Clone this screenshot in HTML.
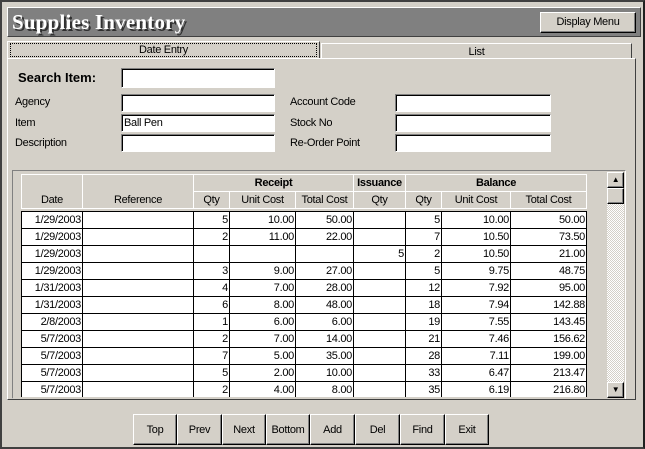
<!DOCTYPE html>
<html><head><style>
*{box-sizing:border-box;margin:0;padding:0}
body{width:645px;height:449px;background:#d4d0c8;font-family:"Liberation Sans",sans-serif;font-size:11px;position:relative;overflow:hidden;color:#000}
.a{position:absolute}
.frame{left:0;top:0;width:645px;height:449px;border:2px solid #404040;border-right-color:#202020}
.title{left:7px;top:7px;width:634px;height:30px;background:#808080;border:1px solid #fff;border-right-color:#404040;border-bottom-color:#404040}
.title span{position:absolute;left:4px;top:2px;font-family:"Liberation Serif",serif;font-size:21px;font-weight:bold;color:#fff;text-shadow:2px 2px 0 #303030;letter-spacing:0.2px}
.btn{background:#d4d0c8;border:1px solid;border-color:#fff #000 #000 #fff;box-shadow:inset -1px -1px 0 #808080;text-align:center;letter-spacing:-0.3px}
.tab{top:41px;height:18px;border:1px solid;border-color:#fff #404040 #d4d0c8 #fff;text-align:center;line-height:15px;letter-spacing:-0.3px}
.panel{left:7px;top:58px;width:629px;height:342px;border:1px solid;border-color:#fff #404040 #404040 #fff}
.lbl{letter-spacing:-0.3px}
.in{background:#fff;border:1px solid;border-color:#808080 #fff #fff #808080;box-shadow:inset 1px 1px 0 #000;padding:2px 0 0 2px;letter-spacing:-0.3px}
.grid{left:12px;top:170px;width:614px;height:229px;border:1px solid;border-color:#808080 #fff #fff #808080}
table{border-collapse:collapse;position:absolute;left:21px;top:174px;table-layout:fixed}
td{border:1px solid #000;height:17px;padding:0 1px;text-align:right;letter-spacing:-0.3px;white-space:nowrap;overflow:hidden;background:#fff;line-height:15px}
th{font-weight:normal;border:1px solid #fff;height:17px;background:#d4d0c8;letter-spacing:-0.3px;line-height:15px}
th.b{font-weight:bold}
.sb{left:607px;top:172px;width:17px;height:226px;background:repeating-conic-gradient(#d4d0c8 0 25%,#fff 0 50%) 0 0/2px 2px}
</style></head><body>
<div class="a frame"></div>
<div class="a title"><span>Supplies Inventory</span></div>
<div class="a btn" style="left:540px;top:12px;width:96px;height:21px;line-height:19px">Display Menu</div>
<div class="a tab" style="left:7px;width:313px"><span style="border:1px dotted #000;display:block;margin:1px 2px;line-height:12px">Date Entry</span></div>
<div class="a tab" style="left:321px;top:43px;width:311px;height:16px;line-height:17px">List</div>
<div class="a panel"></div>
<div class="a" style="left:18px;top:70px;font-size:13px;font-weight:bold">Search Item:</div>
<div class="a in" style="left:121px;top:68px;width:154px;height:20px"></div>
<div class="a lbl" style="left:15px;top:96px">Agency</div>
<div class="a lbl" style="left:15px;top:117px">Item</div>
<div class="a lbl" style="left:15px;top:137px">Description</div>
<div class="a in" style="left:121px;top:94px;width:154px;height:18px"></div>
<div class="a in" style="left:121px;top:114px;width:154px;height:18px">Ball Pen</div>
<div class="a in" style="left:121px;top:134px;width:154px;height:18px"></div>
<div class="a lbl" style="left:290px;top:96px">Account Code</div>
<div class="a lbl" style="left:290px;top:117px">Stock No</div>
<div class="a lbl" style="left:290px;top:137px">Re-Order Point</div>
<div class="a in" style="left:395px;top:94px;width:156px;height:18px"></div>
<div class="a in" style="left:395px;top:114px;width:156px;height:18px"></div>
<div class="a in" style="left:395px;top:134px;width:156px;height:18px"></div>
<div class="a grid"></div>
<table>
<colgroup><col style="width:61px"><col style="width:111px"><col style="width:36px"><col style="width:66px"><col style="width:58px"><col style="width:52px"><col style="width:36px"><col style="width:69px"><col style="width:76px"></colgroup>
<tr><th rowspan="2" style="vertical-align:bottom">Date</th><th rowspan="2" style="vertical-align:bottom">Reference</th><th colspan="3" class="b">Receipt</th><th class="b">Issuance</th><th colspan="3" class="b">Balance</th></tr>
<tr><th>Qty</th><th>Unit Cost</th><th>Total Cost</th><th>Qty</th><th>Qty</th><th>Unit Cost</th><th>Total Cost</th></tr>
<tr><td colspan="9" style="height:3px;border:none;background:#d4d0c8"></td></tr>
<tr><td>1/29/2003</td><td></td><td>5</td><td>10.00</td><td>50.00</td><td></td><td>5</td><td>10.00</td><td>50.00</td></tr>
<tr><td>1/29/2003</td><td></td><td>2</td><td>11.00</td><td>22.00</td><td></td><td>7</td><td>10.50</td><td>73.50</td></tr>
<tr><td>1/29/2003</td><td></td><td></td><td></td><td></td><td>5</td><td>2</td><td>10.50</td><td>21.00</td></tr>
<tr><td>1/29/2003</td><td></td><td>3</td><td>9.00</td><td>27.00</td><td></td><td>5</td><td>9.75</td><td>48.75</td></tr>
<tr><td>1/31/2003</td><td></td><td>4</td><td>7.00</td><td>28.00</td><td></td><td>12</td><td>7.92</td><td>95.00</td></tr>
<tr><td>1/31/2003</td><td></td><td>6</td><td>8.00</td><td>48.00</td><td></td><td>18</td><td>7.94</td><td>142.88</td></tr>
<tr><td>2/8/2003</td><td></td><td>1</td><td>6.00</td><td>6.00</td><td></td><td>19</td><td>7.55</td><td>143.45</td></tr>
<tr><td>5/7/2003</td><td></td><td>2</td><td>7.00</td><td>14.00</td><td></td><td>21</td><td>7.46</td><td>156.62</td></tr>
<tr><td>5/7/2003</td><td></td><td>7</td><td>5.00</td><td>35.00</td><td></td><td>28</td><td>7.11</td><td>199.00</td></tr>
<tr><td>5/7/2003</td><td></td><td>5</td><td>2.00</td><td>10.00</td><td></td><td>33</td><td>6.47</td><td>213.47</td></tr>
<tr><td>5/7/2003</td><td></td><td>2</td><td>4.00</td><td>8.00</td><td></td><td>35</td><td>6.19</td><td>216.80</td></tr>
</table>
<div class="a" style="left:13px;top:397px;width:612px;height:2px;background:#d4d0c8"></div>
<div class="a sb"></div>
<div class="a btn" style="left:607px;top:172px;width:17px;height:16px;font-size:8px;line-height:14px">▲</div>
<div class="a btn" style="left:607px;top:188px;width:17px;height:16px"></div>
<div class="a btn" style="left:607px;top:382px;width:17px;height:16px;font-size:8px;line-height:14px">▼</div>
<div class="a btn" style="left:133px;top:414px;width:44px;height:31px;line-height:30px">Top</div>
<div class="a btn" style="left:177px;top:414px;width:45px;height:31px;line-height:30px">Prev</div>
<div class="a btn" style="left:222px;top:414px;width:44px;height:31px;line-height:30px">Next</div>
<div class="a btn" style="left:266px;top:414px;width:44px;height:31px;line-height:30px">Bottom</div>
<div class="a btn" style="left:310px;top:414px;width:45px;height:31px;line-height:30px">Add</div>
<div class="a btn" style="left:355px;top:414px;width:45px;height:31px;line-height:30px">Del</div>
<div class="a btn" style="left:400px;top:414px;width:45px;height:31px;line-height:30px">Find</div>
<div class="a btn" style="left:445px;top:414px;width:44px;height:31px;line-height:30px">Exit</div>
</body></html>
